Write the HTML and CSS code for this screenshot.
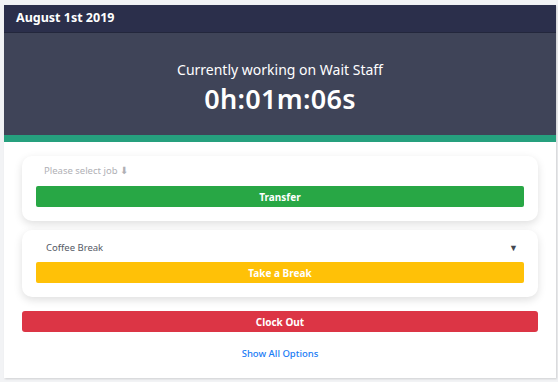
FILE: index.html
```html
<!DOCTYPE html>
<html>
<head>
<meta charset="utf-8">
<link rel="stylesheet" href="styles.css">
</head>
<body>
<div class="card">
  <div class="card-header">August 1st 2019</div>
  <div class="status">
    <div class="status-label">Currently working on Wait Staff</div>
    <div class="status-time">0h:01m:06s</div>
  </div>
  <div class="card-body">
    <div class="panel">
      <div class="placeholder">Please select job ⬇</div>
      <button class="btn btn-green">Transfer</button>
    </div>
    <div class="panel panel-select">
      <div class="select-row">
        <span class="select-text">Coffee Break</span>
        <span class="caret">▼</span>
      </div>
      <button class="btn btn-yellow">Take a Break</button>
    </div>
    <button class="btn btn-red">Clock Out</button>
    <div class="link-row"><a class="link">Show All Options</a></div>
  </div>
</div>
</body>
</html>
```

FILE: styles.css
```css
html, body {
  margin: 0;
  padding: 0;
}
body {
  background: #f2f3f5;
  font-family: "Noto Sans", "Open Sans", sans-serif;
  padding: 5px 2px 4px 4px;
  box-sizing: border-box;
  height: 382px;
}
.card {
  background: #fff;
  height: 373px;
  box-shadow: 1px 1px 2px rgba(0,0,0,0.15);
  display: flex;
  flex-direction: column;
}
.card-header {
  background: #2b2f4b;
  color: #fff;
  font-weight: 700;
  font-size: 12.5px;
  height: 28px;
  line-height: 26px;
  padding-left: 12px;
  border-bottom: 1px solid #23273c;
  box-sizing: border-box;
  flex: none;
}
.status {
  background: #3f4458;
  height: 109px;
  border-bottom: 7px solid #26a07e;
  color: #fff;
  text-align: center;
  display: flex;
  flex-direction: column;
  align-items: center;
  padding-top: 27px;
  box-sizing: border-box;
  flex: none;
}
.status-label {
  font-size: 14px;
  line-height: 20px;
}
.status-time {
  font-size: 27px;
  font-weight: 600;
  line-height: 34px;
  margin-top: 2px;
  letter-spacing: 0.3px;
}
.card-body {
  padding: 14px 18px 0 18px;
  display: flex;
  flex-direction: column;
}
.panel {
  background: #fff;
  border-radius: 10px;
  box-shadow: 0 3px 8px rgba(0,0,0,0.13);
  padding: 6px 14px 14px 14px;
  margin-bottom: 9px;
  display: flex;
  flex-direction: column;
}
.panel-select {
  padding-top: 3px;
}
.placeholder {
  font-size: 9.5px;
  color: #b0b0b5;
  padding-left: 8px;
  height: 24px;
  line-height: 18px;
}
.select-row {
  display: flex;
  justify-content: space-between;
  align-items: center;
  padding: 0 6px 0 10px;
  height: 29px;
  font-size: 9.5px;
  color: #555a66;
}
.caret {
  font-size: 9px;
  color: #44474f;
}
.btn {
  border: none;
  border-radius: 2px;
  height: 21px;
  color: #fff;
  font-family: "Noto Sans", sans-serif;
  font-weight: 700;
  font-size: 10px;
  padding: 0;
  width: 100%;
  flex: none;
}
.btn-green { background: #28a745; }
.btn-yellow { background: #ffc107; }
.btn-red { background: #dc3545; border-radius: 3px; margin-top: 5px; }
.link-row {
  text-align: center;
  margin-top: 12px;
  line-height: 14px;
}
.link {
  color: #1a7cf5;
  font-size: 9.5px;
  font-weight: 500;
}
```
